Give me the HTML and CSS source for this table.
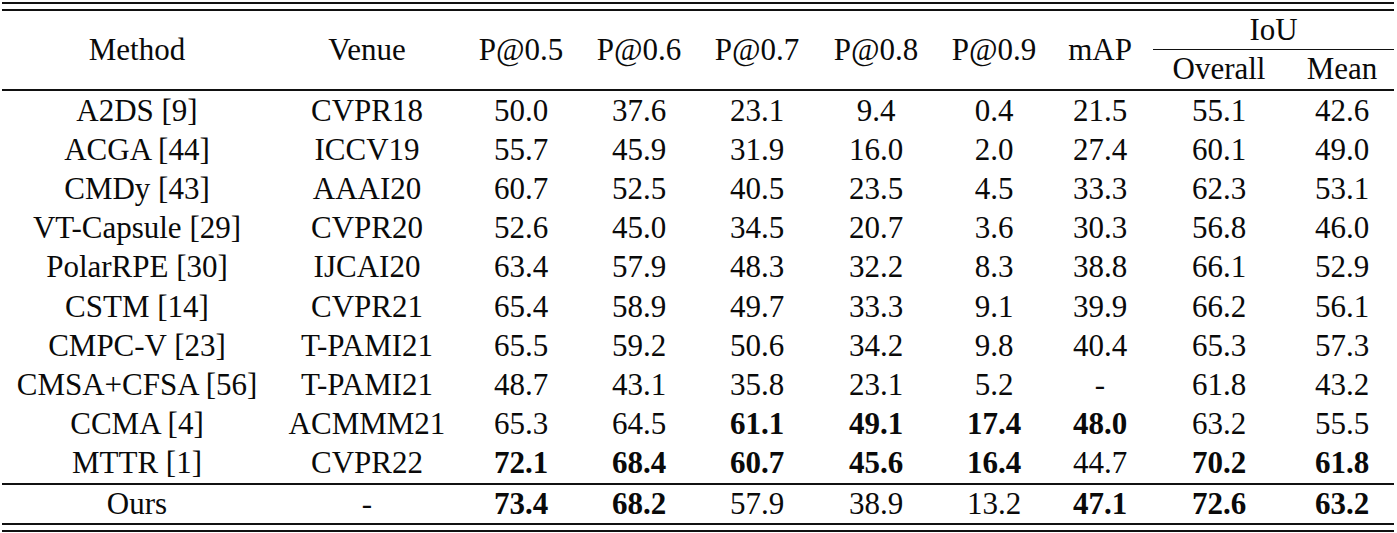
FILE: index.html
```html
<!DOCTYPE html>
<html lang="en">

<head>
    <meta charset="UTF-8">
    <meta name="viewport" content="width=device-width, initial-scale=1.0">
    <title>Results Table</title>
    <link rel="stylesheet" href="styles.css">
</head>

<body>
    <div class="frame">
        <table class="results">
            <colgroup>
                <col class="c-method">
                <col class="c-venue">
                <col class="c-p">
                <col class="c-p">
                <col class="c-p">
                <col class="c-p8">
                <col class="c-p9">
                <col class="c-map">
                <col class="c-overall">
                <col class="c-mean">
            </colgroup>
            <thead>
                <tr>
                    <th rowspan="2">Method</th>
                    <th rowspan="2">Venue</th>
                    <th rowspan="2">P@0.5</th>
                    <th rowspan="2">P@0.6</th>
                    <th rowspan="2">P@0.7</th>
                    <th rowspan="2">P@0.8</th>
                    <th rowspan="2">P@0.9</th>
                    <th rowspan="2">mAP</th>
                    <th colspan="2" class="iou"><span class="cmid">IoU</span></th>
                </tr>
                <tr>
                    <th class="sub">Overall</th>
                    <th class="sub">Mean</th>
                </tr>
            </thead>
            <tbody>
                <tr><td>A2DS [9]</td><td>CVPR18</td><td>50.0</td><td>37.6</td><td>23.1</td><td>9.4</td><td>0.4</td><td>21.5</td><td>55.1</td><td>42.6</td></tr>
                <tr><td>ACGA [44]</td><td>ICCV19</td><td>55.7</td><td>45.9</td><td>31.9</td><td>16.0</td><td>2.0</td><td>27.4</td><td>60.1</td><td>49.0</td></tr>
                <tr><td>CMDy [43]</td><td>AAAI20</td><td>60.7</td><td>52.5</td><td>40.5</td><td>23.5</td><td>4.5</td><td>33.3</td><td>62.3</td><td>53.1</td></tr>
                <tr><td>VT-Capsule [29]</td><td>CVPR20</td><td>52.6</td><td>45.0</td><td>34.5</td><td>20.7</td><td>3.6</td><td>30.3</td><td>56.8</td><td>46.0</td></tr>
                <tr><td>PolarRPE [30]</td><td>IJCAI20</td><td>63.4</td><td>57.9</td><td>48.3</td><td>32.2</td><td>8.3</td><td>38.8</td><td>66.1</td><td>52.9</td></tr>
                <tr><td>CSTM [14]</td><td>CVPR21</td><td>65.4</td><td>58.9</td><td>49.7</td><td>33.3</td><td>9.1</td><td>39.9</td><td>66.2</td><td>56.1</td></tr>
                <tr><td>CMPC-V [23]</td><td>T-PAMI21</td><td>65.5</td><td>59.2</td><td>50.6</td><td>34.2</td><td>9.8</td><td>40.4</td><td>65.3</td><td>57.3</td></tr>
                <tr><td>CMSA+CFSA [56]</td><td>T-PAMI21</td><td>48.7</td><td>43.1</td><td>35.8</td><td>23.1</td><td>5.2</td><td>-</td><td>61.8</td><td>43.2</td></tr>
                <tr><td>CCMA [4]</td><td>ACMMM21</td><td>65.3</td><td>64.5</td><td><b>61.1</b></td><td><b>49.1</b></td><td><b>17.4</b></td><td><b>48.0</b></td><td>63.2</td><td>55.5</td></tr>
                <tr class="last"><td>MTTR [1]</td><td>CVPR22</td><td><b>72.1</b></td><td><b>68.4</b></td><td><b>60.7</b></td><td><b>45.6</b></td><td><b>16.4</b></td><td>44.7</td><td><b>70.2</b></td><td><b>61.8</b></td></tr>
            </tbody>
            <tfoot>
                <tr><td>Ours</td><td>-</td><td><b>73.4</b></td><td><b>68.2</b></td><td>57.9</td><td>38.9</td><td>13.2</td><td><b>47.1</b></td><td><b>72.6</b></td><td><b>63.2</b></td></tr>
            </tfoot>
        </table>
    </div>
</body>

</html>
```

FILE: styles.css
```css
body {
    margin: 0;
    background: #fff;
    color: #0a0a0a;
    font-family: "Liberation Serif", "Times New Roman", serif;
}

.frame {
    margin: 2px 3px 0 2px;
    padding: 5px 0;
    border-top: 2px solid #111;
    border-bottom: 2px solid #111;
}

.results {
    width: 100%;
    table-layout: fixed;
    border-collapse: separate;
    border-spacing: 0;
    border-top: 2px solid #111;
    border-bottom: 2px solid #111;
    font-size: 31px;
}

.c-method { width: 270px; }
.c-venue { width: 190px; }
.c-p { width: 118px; }
.c-p8 { width: 120px; }
.c-p9 { width: 116px; }
.c-map { width: 96px; }
.c-overall { width: 142px; }
.c-mean { width: 104px; }

.results th,
.results td {
    padding: 0;
    text-align: center;
    white-space: nowrap;
    font-weight: normal;
    vertical-align: middle;
}

.results thead th {
    line-height: 38px;
    border-bottom: 2px solid #111;
}

/* cmidrule(l): trimmed on the left only */
.results thead th.iou {
    line-height: 38px;
    padding-left: 5px;
    border-bottom: none;
}

.results thead th.iou .cmid {
    display: block;
    border-bottom: 1.5px solid #111;
}

.results thead th.sub {
    line-height: 38.5px;
}

.results tbody td {
    line-height: 39.2px;
}

.results tbody tr.last td {
    border-bottom: 2px solid #111;
}

.results tfoot td {
    line-height: 38.5px;
}

.results b {
    font-weight: bold;
}
```
